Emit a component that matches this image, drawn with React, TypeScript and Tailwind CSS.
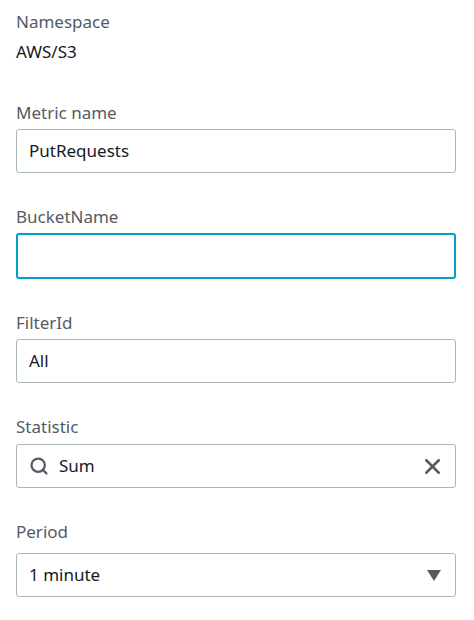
import { Search, X } from 'lucide-react'

const font = { fontFamily: '"Noto Sans", "Open Sans", sans-serif' }

function Field({ label, children, gap = 'mt-1' }: { label: string; children: React.ReactNode; gap?: string }) {
  return (
    <div>
      <div className="text-[17px] leading-6 text-[#545b64]">{label}</div>
      <div className={gap}>{children}</div>
    </div>
  )
}

function Box({ children, focused = false }: { children?: React.ReactNode; focused?: boolean }) {
  return (
    <div
      className={`flex items-center rounded-[3px] bg-white px-3 text-[17px] text-[#16191f] ${
        focused ? 'h-[46px] border-2 border-[#00a1c9]' : 'h-[44px] border border-[#aab7b8]'
      }`}
    >
      {children}
    </div>
  )
}

export default function App() {
  return (
    <div className="min-h-screen bg-white pl-4 pr-[18px] pt-[10px]" style={font}>
      <div className="text-[17px] leading-6 text-[#545b64]">Namespace</div>
      <div className="mt-[6px] text-[17px] leading-6 text-[#16191f]">AWS/S3</div>

      <div className="mt-[37px] flex flex-col gap-[32px]">
        <Field label="Metric name">
          <Box>PutRequests</Box>
        </Field>
        <Field label="BucketName">
          <Box focused />
        </Field>
        <Field label="FilterId">
          <Box>All</Box>
        </Field>
        <Field label="Statistic" gap="mt-[5px]">
          <Box>
            <Search size={20} strokeWidth={2.7} className="text-[#545b64]" />
            <span className="ml-[10px] flex-1">Sum</span>
            <X size={25} strokeWidth={2.4} className="-mr-[2px] text-[#545b64]" />
          </Box>
        </Field>
        <Field label="Period" gap="mt-[9px]">
          <Box>
            <span className="flex-1">1 minute</span>
            <svg width="14" height="11" viewBox="0 0 14 11" className="mr-[2px]">
              <path d="M0 0H14L7 11Z" fill="#545b64" />
            </svg>
          </Box>
        </Field>
      </div>
    </div>
  )
}
